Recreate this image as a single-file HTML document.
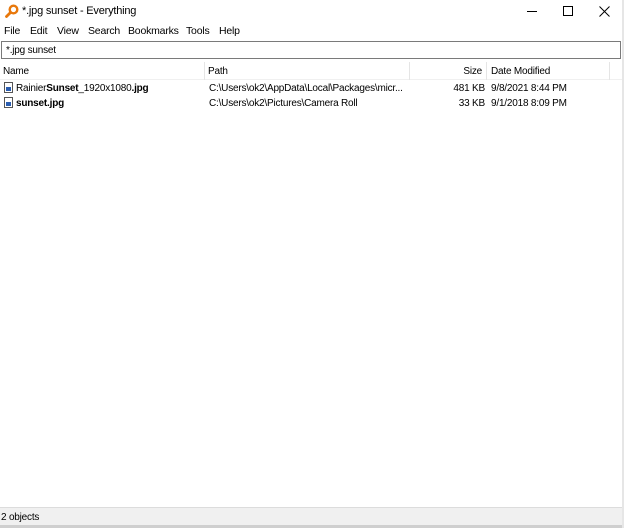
<!DOCTYPE html>
<html><head><meta charset="utf-8"><style>
*{margin:0;padding:0;box-sizing:border-box}
body{width:624px;height:528px;background:#fff;font-family:"Liberation Sans",sans-serif;font-size:10px;letter-spacing:-0.2px;color:#000;position:relative;overflow:hidden}
.abs{position:absolute;white-space:nowrap}
.title{left:22px;top:5px;font-size:11px}
.menu span{position:absolute;top:25px;font-size:10.5px}
.search{left:1px;top:41px;width:620px;height:18px;border:1px solid #7a7a7a;padding:3px 4px;font-size:10px}
.hdr{top:62px;height:18px;left:0;width:624px;border-bottom:1px solid #f0f0f0}
.sep{position:absolute;top:62px;width:1px;height:18px;background:#e5e5e5}
.ico{position:absolute;width:9px;height:11px;border:1px solid #555;background:#fff}
.ico:after{content:"";position:absolute;left:1px;top:4px;width:5px;height:4px;background:#2a5db0}
.r{text-align:right}
</style></head><body>
<svg class="abs" style="left:5px;top:4px" width="14" height="14" viewBox="0 0 14 14"><circle cx="8.5" cy="5.5" r="3.8" fill="none" stroke="#e8780c" stroke-width="2.4"/><line x1="5.5" y1="8.5" x2="1.5" y2="12.5" stroke="#e8780c" stroke-width="2.8" stroke-linecap="round"/></svg>
<div class="abs title">*.jpg sunset - Everything</div>
<div class="abs" style="left:527px;top:11px;width:10px;height:1px;background:#000"></div>
<div class="abs" style="left:563px;top:6px;width:10px;height:10px;border:1px solid #000"></div>
<svg class="abs" style="left:599px;top:6px" width="11" height="11"><path d="M0.5 0.5L10.5 10.5M10.5 0.5L0.5 10.5" stroke="#000" stroke-width="1"/></svg>
<div class="menu"><span style="left:4px">File</span><span style="left:30px">Edit</span><span style="left:57px">View</span><span style="left:88px">Search</span><span style="left:128px">Bookmarks</span><span style="left:186px">Tools</span><span style="left:219px">Help</span></div>
<div class="abs search">*.jpg sunset</div>
<div class="abs hdr"></div>
<div class="abs" style="left:3px;top:66px">Name</div>
<div class="abs" style="left:208px;top:66px">Path</div>
<div class="abs r" style="left:430px;width:52px;top:66px">Size</div>
<div class="abs" style="left:491px;top:66px">Date Modified</div>
<div class="sep" style="left:204px"></div><div class="sep" style="left:409px"></div><div class="sep" style="left:486px"></div><div class="sep" style="left:609px"></div>
<div class="ico" style="left:4px;top:82px"></div>
<div class="abs" style="left:16px;top:83px">Rainier<b>Sunset</b>_1920x1080<b>.jpg</b></div>
<div class="abs" style="left:209px;top:83px">C:\Users\ok2\AppData\Local\Packages\micr...</div>
<div class="abs r" style="left:430px;width:55px;top:83px">481 KB</div>
<div class="abs" style="left:491px;top:83px">9/8/2021 8:44 PM</div>
<div class="ico" style="left:4px;top:97px"></div>
<div class="abs" style="left:16px;top:98px"><b>sunset.jpg</b></div>
<div class="abs" style="left:209px;top:98px">C:\Users\ok2\Pictures\Camera Roll</div>
<div class="abs r" style="left:430px;width:55px;top:98px">33 KB</div>
<div class="abs" style="left:491px;top:98px">9/1/2018 8:09 PM</div>
<div class="abs" style="left:0;top:507px;width:624px;height:18px;background:#f0f0f0;border-top:1px solid #dcdcdc"></div>
<div class="abs" style="left:1px;top:512px;font-size:10px">2 objects</div>
<div class="abs" style="left:0;top:525px;width:624px;height:3px;background:#cfcfcf"></div>
<div class="abs" style="left:622px;top:0;width:2px;height:528px;background:#e6e6e6"></div>
</body></html>
